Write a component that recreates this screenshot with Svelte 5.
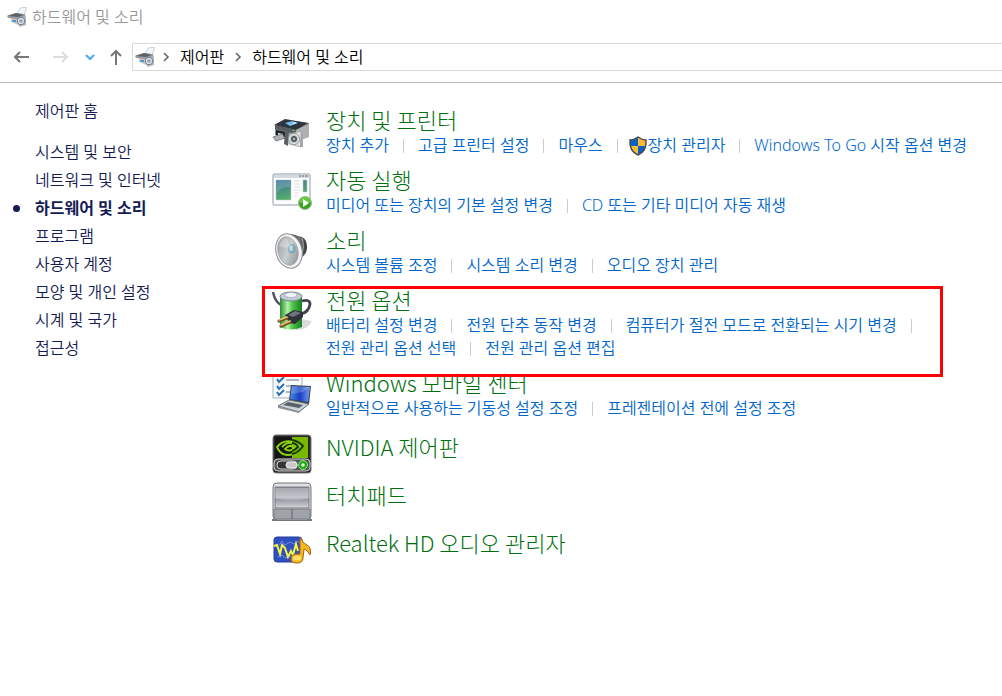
<script>
	const sidebar = [
		'시스템 및 보안',
		'네트워크 및 인터넷',
		'하드웨어 및 소리',
		'프로그램',
		'사용자 계정',
		'모양 및 개인 설정',
		'시계 및 국가',
		'접근성'
	];
	const current = '하드웨어 및 소리';

	const categories = [
		{
			icon: 'printer',
			title: '장치 및 프린터',
			tasks: ['장치 추가', '고급 프린터 설정', '마우스', '장치 관리자', 'Windows To Go 시작 옵션 변경']
		},
		{
			icon: 'autoplay',
			title: '자동 실행',
			tasks: ['미디어 또는 장치의 기본 설정 변경', 'CD 또는 기타 미디어 자동 재생']
		},
		{
			icon: 'speaker',
			title: '소리',
			tasks: ['시스템 볼륨 조정', '시스템 소리 변경', '오디오 장치 관리']
		},
		{
			icon: 'power',
			title: '전원 옵션',
			marked: true,
			tasks: [
				'배터리 설정 변경',
				'전원 단추 동작 변경',
				'컴퓨터가 절전 모드로 전환되는 시기 변경',
				'전원 관리 옵션 선택',
				'전원 관리 옵션 편집'
			]
		},
		{
			icon: 'mobility',
			title: 'Windows 모바일 센터',
			tasks: ['일반적으로 사용하는 기동성 설정 조정', '프레젠테이션 전에 설정 조정']
		}
	];

	const applets = [
		{ icon: 'nvidia', title: 'NVIDIA 제어판' },
		{ icon: 'touchpad', title: '터치패드' },
		{ icon: 'realtek', title: 'Realtek HD 오디오 관리자' }
	];

	// tasks that need administrator rights
	const elevated = ['장치 관리자'];
</script>

{#snippet smallPrinter()}
	<svg class="small-icon" viewBox="0 0 20 20" aria-hidden="true">
		<path d="M10 7 13 1 20 0 17 8z" fill="#f4f6f7" stroke="#b8bec3" stroke-width=".7" />
		<path d="M0 9 9 6 18 7 19 11 12 13 1 11z" fill="#9aa1a7" />
		<path d="M0 9 9 6 17 8 11 10z" fill="#5b636b" />
		<path d="M4 12 11 12 11 18 4 15z" fill="#c6cbd0" />
		<path d="M5 13 9 13 9 15 6 15z" fill="#4b94cb" />
		<path d="M11 11 19 9 19 18 12 20z" fill="#b4bcc3" />
		<circle cx="14" cy="14" r="3.8" fill="#dde3e8" stroke="#6d7985" />
		<circle cx="14" cy="14" r="1.8" fill="#8da2b4" />
	</svg>
{/snippet}

{#snippet chevron()}
	<svg class="chevron" viewBox="0 0 8 10" aria-hidden="true">
		<path d="M2 1 6 5 2 9" fill="none" stroke="#666" stroke-width="1.6" />
	</svg>
{/snippet}

{#snippet picture(name)}
	<svg class="icon" viewBox="0 0 40 40" aria-hidden="true">
		{#if name === 'printer'}
			<path d="M3 15 15 9 37 12 37 25 23 31 3 24z" fill="#85898c" />
			<path d="M2 14 13 8 36 12 24 19z" fill="#30363c" />
			<path d="M3 14 24 19 24 23 3 18z" fill="#555c62" />
			<path d="M24 19 37 13 37 26 24 31z" fill="#aeb1b3" />
			<path d="M13 12 20 10 26 12 18 15z" fill="#69b8e9" />
			<path d="M18 14 25 12 23 11z" fill="#e4f7ff" />
			<path d="M4 19 14 21 14 27 4 24z" fill="#202529" />
			<path d="M6 22 11 23 11 28 6 26z" fill="#f7f8f8" />
			<path d="M1 26 10 23 13 27 4 30z" fill="#aeb2b5" stroke="#5b6064" stroke-width=".7" />
			<path d="M13 20 17 21 16 35 12 33z" fill="#5c6063" />
			<path d="M17 23 29 20 29 36 17 33z" fill="#dcdddd" stroke="#9b9d9e" stroke-width=".7" />
			<path d="M29 22 31 23 31 36 28 36z" fill="#a4a6a7" />
			<circle cx="22" cy="28" r="5.5" fill="#eee" stroke="#929698" />
			<circle cx="22" cy="28" r="3.6" fill="#4e565c" stroke="#c9cccd" />
			<circle cx="22" cy="28" r="1.3" fill="#9eb9ca" />
			<path d="M20 19h3v1h-3z" fill="#58c52e" />
		{:else if name === 'autoplay'}
			<defs>
				<linearGradient id="screen" x2=".4" y2="1">
					<stop stop-color="#3a709e" />
					<stop offset="1" stop-color="#56b365" />
				</linearGradient>
			</defs>
			<rect x="1" y="3" width="37" height="31" rx="1" fill="#fff" stroke="#8d999f" />
			<path d="M2 4h35v3H2z" fill="#d3dbdf" />
			<path d="M27 5h2m1 0h2m1 0h3" stroke="#5f6b72" />
			<path d="M4 9h15v20H4zM31 9h4v12h-4z" fill="url(#screen)" stroke="#b5c6c9" stroke-width=".6" />
			<path d="M5 10h13v6Q9 15 5 22z" fill="#fff" opacity=".17" />
			<path d="M22 10h6m-6 3h6m-6 3h6m-6 3h6m-6 3h5m-5 3h4" stroke="#d9dddf" />
			<circle cx="33" cy="32" r="6.5" fill="#36a51d" stroke="#a2b5a0" />
			<path d="M27 31a6 6 0 0 1 12 0q-6 3-12 0z" fill="#8cdb5a" opacity=".6" />
			<path d="M31 28v8l6-4z" fill="#fff" />
		{:else if name === 'speaker'}
			<defs>
				<linearGradient id="magnet" x2="1">
					<stop stop-color="#222" />
					<stop offset=".5" stop-color="#777" />
					<stop offset="1" stop-color="#303234" />
				</linearGradient>
				<linearGradient id="cone" x2="1" y2="1">
					<stop stop-color="#8d9498" />
					<stop offset=".5" stop-color="#c9ced0" />
					<stop offset="1" stop-color="#84898b" />
				</linearGradient>
			</defs>
			<path d="M19 3 30 6Q35 8 35 17 34 24 30 26L20 33z" fill="url(#magnet)" />
			<path d="M30 7q3 9-1 18" fill="none" stroke="#aaa" />
			<ellipse cx="17" cy="20" rx="13" ry="17.5" transform="rotate(-14 17 20)" fill="#f4f4f4" stroke="#898c8e" />
			<ellipse cx="16" cy="20" rx="10" ry="14.5" transform="rotate(-14 16 20)" fill="url(#cone)" stroke="#9ba0a2" stroke-width=".7" />
			<path d="M7 16Q8 8 15 7L18 17z" fill="#fff" opacity=".3" />
			<ellipse cx="20" cy="18" rx="4" ry="5" fill="#84a9bc" />
			<ellipse cx="19" cy="17" rx="2" ry="3" fill="#c3d8e1" />
		{:else if name === 'power'}
			<defs>
				<linearGradient id="battery" x2="1">
					<stop stop-color="#278c2a" />
					<stop offset=".35" stop-color="#b4f2aa" />
					<stop offset=".55" stop-color="#52c94d" />
					<stop offset="1" stop-color="#187c20" />
				</linearGradient>
			</defs>
			<path d="M28 28 40 30Q36 39 24 39z" fill="#999" opacity=".35" />
			<path d="M1 1Q3 11 9 14" fill="none" stroke="#515366" stroke-width="2.5" />
			<path d="M8 6v30q11 5 22 0V6z" fill="url(#battery)" />
			<ellipse cx="19" cy="5.5" rx="11" ry="4.5" fill="#c2cad2" stroke="#6d858a" />
			<ellipse cx="19" cy="4" rx="6" ry="2.5" fill="#f2f5fb" stroke="#99a3c3" stroke-width=".6" />
			<path d="M30 10Q38 8 38 13 37 21 29 23" fill="none" stroke="#414354" stroke-width="2.8" />
			<path d="M13 24 22 19 31 21 31 26 23 33 17 32z" fill="#30323a" />
			<path d="M16 24 23 20 29 22 21 26z" fill="#71737c" />
			<path d="m15 27-8 3m11 1-9 4" stroke="#77511d" stroke-width="3.2" stroke-linecap="round" />
			<path d="m15 26-8 3m11 1-9 4" stroke="#e9c477" stroke-width="1.6" stroke-linecap="round" />
		{:else if name === 'mobility'}
			<defs>
				<linearGradient id="laptop" x2="1">
					<stop stop-color="#4189ea" />
					<stop offset=".5" stop-color="#1c3dc0" />
					<stop offset="1" stop-color="#739df0" />
				</linearGradient>
			</defs>
			<path d="M1 1h29v23H1z" fill="#f7f9fb" stroke="#a4b0bb" />
			<path d="M14 6h13m-13 6h10m-10 6h6" stroke="#aeb8c4" stroke-width="2" />
			<path d="m5 5 2 3 5-5M5 12l2 3 5-5M5 18l2 3 5-5" fill="none" stroke="#2470b5" stroke-width="2" />
			<path d="M19 11 39 12 37 30 17 26z" fill="#39434e" />
			<path d="M20 12 38 13 36 28 18 25z" fill="url(#laptop)" />
			<path d="M20 12 38 13 31 18 19 20z" fill="#fff" opacity=".2" />
			<path d="M17 26 37 30 27 38 6 32z" fill="#cbd1d6" stroke="#646d75" />
			<path d="M16 28 31 31 27 34 11 31z" fill="#596269" />
			<path d="M6 32 27 38v1L6 34z" fill="#8e969c" />
		{:else if name === 'nvidia'}
			<rect x="1" y="1" width="38" height="38" rx="3" fill="#282828" stroke="#777" />
			<path d="M16 3h20v21H16z" fill="#78b900" />
			<path d="M3 3h17v21H3z" fill="#121712" />
			<path d="M5 13Q14 2 29 12 22 24 11 20 7 18 5 13z" fill="none" stroke="#8bd312" stroke-width="2" />
			<path d="M10 13q7-8 15-1-7 7-12 3 4-5 8-2" fill="none" stroke="#8bd312" stroke-width="2" />
			<path d="M20 6q6 1 11 6-5 7-11 8M20 9q4 0 6 4-3 3-6 4" fill="none" stroke="#173900" stroke-width="2" />
			<rect x="2" y="25" width="36" height="12" rx="4" fill="#555" stroke="#ccc" />
			<rect x="5" y="27" width="20" height="8" rx="4" fill="#333" stroke="#ccc" />
			<rect x="14" y="28" width="11" height="6" rx="3" fill="#c9c9c9" stroke="#eee" />
			<circle cx="31" cy="31" r="4.5" fill="#22a520" stroke="#8de982" />
			<circle cx="31" cy="31" r="1.8" fill="#d9ffc9" />
		{:else if name === 'touchpad'}
			<defs>
				<linearGradient id="pad" x2="0" y2="1">
					<stop stop-color="#8d9099" />
					<stop offset=".5" stop-color="#b5b7bf" />
					<stop offset=".6" stop-color="#9699a3" />
					<stop offset="1" stop-color="#d4d5d8" />
				</linearGradient>
			</defs>
			<path d="M0 38h40" stroke="#777" stroke-width="2" />
			<rect x="1" y="1" width="38" height="37" rx="4" fill="#dfe0e3" stroke="#74777c" />
			<path d="M3 5h34v21H3z" fill="url(#pad)" stroke="#666970" stroke-width=".8" />
			<path d="M3 6h34v10Q20 21 3 16z" fill="#fff" opacity=".2" />
			<path d="M2 27h18v10H4q-2 0-2-2zm18 0h18v8q0 2-2 2H20z" fill="#a0a3aa" stroke="#696c72" stroke-width=".7" />
		{:else if name === 'realtek'}
			<rect x="2" y="7" width="28" height="25" rx="3" fill="#2f50c4" stroke="#263c99" />
			<path d="m7 15 3-4 3 4 5-3 4 2 4-3 3 4M6 27l4-2 3 3 5-2 3 2" fill="none" stroke="#788de0" />
			<path d="m2 16 3-1 3 9 2-9 3 3 3 9 3-6 2 4 3-11 2 7" fill="none" stroke="#f6f63c" stroke-width="2" />
			<path d="M29 8q1 5 6 7 5 3 3 10-2-5-6-6l-1 9q0 5-6 5t-6-4q0-5 8-5h1V8z" fill="#f8b820" stroke="#a76405" />
			<ellipse cx="25" cy="28" rx="4" ry="2.5" fill="#ffe06a" />
		{/if}
	</svg>
{/snippet}

<div class="window">
	<header>
		<div class="titlebar">
			{@render smallPrinter()}
			<span>하드웨어 및 소리</span>
		</div>

		<div class="toolbar">
			<div class="buttons">
				<button aria-label="뒤로">
					<svg width="16" height="16" viewBox="0 0 16 16"><path d="M6 3 1 8l5 5M1 8h14" stroke="#777" /></svg>
				</button>
				<button aria-label="앞으로" disabled>
					<svg width="16" height="16" viewBox="0 0 16 16"><path d="m9 3 5 5-5 5M14 8H0" stroke="#ddd" /></svg>
				</button>
				<button aria-label="최근 위치">
					<svg width="10" height="16" viewBox="0 0 10 16"><path d="m1 6 4 4 4-4" stroke="#4aa8f8" /></svg>
				</button>
				<button aria-label="위로">
					<svg width="14" height="16" viewBox="0 0 14 16"><path d="m2 7 5-5 5 5M7 2v14" stroke="#777" /></svg>
				</button>
			</div>
			<nav class="address" aria-label="주소">
				{@render smallPrinter()}
				{@render chevron()}
				<a href="#home">제어판</a>
				{@render chevron()}
				<a href="#hardware">하드웨어 및 소리</a>
			</nav>
		</div>
	</header>

	<div class="body">
		<nav class="sidebar">
			<a class="home" href="#home">제어판 홈</a>
			<ul>
				{#each sidebar as item}
					<li class:current={item === current}><a href="#category">{item}</a></li>
				{/each}
			</ul>
		</nav>

		<main>
			<div class="categories">
				{#each categories as category}
					<section class:marked={category.marked}>
						{@render picture(category.icon)}
						<div class="text">
							<h2><a href="#category">{category.title}</a></h2>
							<ul class="tasks">
								{#each category.tasks as task}
									<li>
										{#if elevated.includes(task)}
											<svg class="shield" viewBox="0 0 20 20" aria-hidden="true">
												<path d="M10 1Q14 4 18 4q1 11-8 15Q1 15 2 4q4 0 8-3z" fill="#fdb933" />
												<path d="M10 1v9H2V4q4 0 8-3zm0 9h8q-1 6-8 9z" fill="#0863c5" />
												<path d="M10 1Q14 4 18 4q1 11-8 15Q1 15 2 4q4 0 8-3z" fill="none" stroke="#4b4f53" stroke-width="1.5" />
											</svg>
										{/if}
										<a href="#task">{task}</a>
									</li>
								{/each}
							</ul>
						</div>
					</section>
				{/each}
			</div>

			<div class="applets">
				{#each applets as applet}
					<section>
						{@render picture(applet.icon)}
						<h2><a href="#applet">{applet.title}</a></h2>
					</section>
				{/each}
			</div>
		</main>
	</div>
</div>

<style>
	:global(body) {
		margin: 0;
		background: #fff;
	}

	.window {
		min-height: 100vh;
		font-family: 'Noto Sans', 'Noto Sans CJK KR', sans-serif;
		font-size: 16px;
		font-weight: 350;
		line-height: 24px;
		color: #000;
	}

	a {
		color: inherit;
		text-decoration: none;
	}

	a:hover {
		text-decoration: underline;
	}

	ul {
		list-style: none;
		margin: 0;
		padding: 0;
	}

	header {
		border-bottom: 1px solid #bbb;
	}

	.titlebar {
		display: flex;
		align-items: center;
		gap: 5px;
		height: 34px;
		padding-left: 7px;
		color: #999;
	}

	.small-icon {
		width: 20px;
		height: 20px;
		flex: none;
	}

	.toolbar {
		display: flex;
		align-items: center;
		padding: 9px 0 11px 14px;
	}

	.buttons {
		display: flex;
		align-items: center;
		width: 118px;
		gap: 16px;
	}

	button {
		display: flex;
		padding: 0;
		border: 0;
		background: none;
	}

	button:nth-child(2) {
		margin-left: 7px;
	}

	button:last-child {
		margin-left: -2px;
	}

	button path {
		fill: none;
		stroke-width: 2;
	}

	.address {
		flex: 1;
		display: flex;
		align-items: center;
		height: 26px;
		padding-left: 2px;
		border: 1px solid #d9d9d9;
		border-right: 0;
		white-space: nowrap;
	}

	.chevron {
		width: 8px;
		height: 10px;
		margin: 0 10px 0 7px;
	}

	.address a + .chevron {
		margin-left: 10px;
	}

	.body {
		display: flex;
		align-items: flex-start;
	}

	.sidebar {
		flex: none;
		box-sizing: border-box;
		width: 272px;
		padding: 14px 0 0 35px;
		line-height: 28px;
		color: #151c55;
	}

	.sidebar ul {
		margin-top: 13px;
	}

	.sidebar li {
		position: relative;
	}

	.current {
		font-weight: bold;
	}

	.current::before {
		content: '';
		position: absolute;
		left: -22px;
		top: 11px;
		width: 7px;
		height: 7px;
		border-radius: 50%;
		background: #151c55;
	}

	main {
		flex: 1;
		padding: 26px 20px 40px 0;
	}

	.categories {
		display: flex;
		flex-direction: column;
		gap: 12px;
	}

	section {
		display: flex;
		gap: 14px;
	}

	.icon {
		flex: none;
		width: 40px;
		height: 40px;
	}

	.categories .icon {
		margin-top: 2px;
	}

	h2 {
		margin: 0 0 5px;
		font-family: 'Noto Sans CJK KR', sans-serif;
		font-size: 22px;
		line-height: 20px;
		font-weight: 300;
		color: #00700f;
	}

	.tasks {
		display: flex;
		flex-wrap: wrap;
		line-height: 23px;
		color: #0066cc;
	}

	.tasks li {
		display: flex;
		align-items: center;
		white-space: nowrap;
	}

	.tasks li:not(:last-child)::after {
		content: '';
		width: 1px;
		height: 14px;
		margin: 0 14px;
		background: #ccc;
	}

	.shield {
		width: 20px;
		height: 20px;
		margin-left: -4px;
	}

	.marked {
		position: relative;
	}

	.marked::after {
		content: '';
		position: absolute;
		inset: -3px 39px -17px -10px;
		border: 3px solid #f00;
		pointer-events: none;
	}

	.applets {
		display: flex;
		flex-direction: column;
		gap: 8px;
		margin-top: 14px;
	}

	.applets h2 {
		padding-top: 2px;
	}
</style>
